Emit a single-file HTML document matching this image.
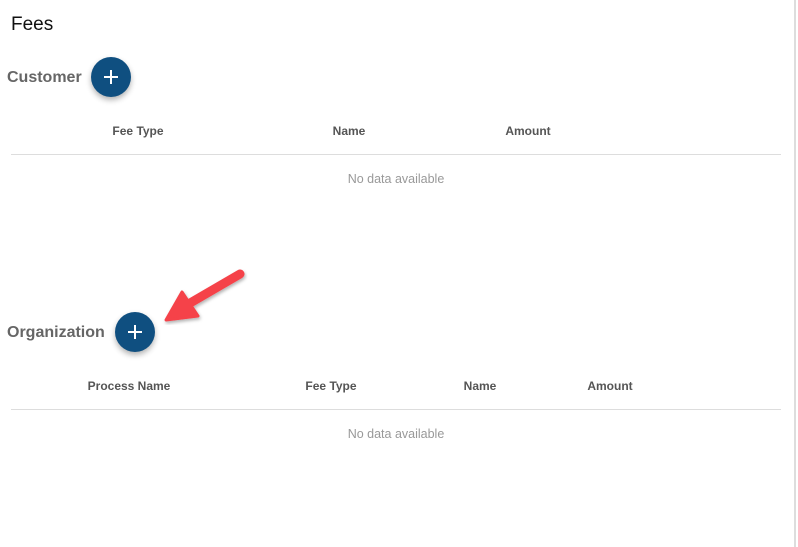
<!DOCTYPE html>
<html><head><style>
body{margin:0;width:798px;height:547px;background:#fff;position:relative;overflow:hidden;font-family:"Liberation Sans",sans-serif;}
.a{position:absolute;}
.t{font-size:19px;color:#111;left:11px;top:14px;}
.h{font-size:16px;font-weight:bold;color:#666;}
.btn{width:40px;height:40px;border-radius:50%;background:#0f4f80;box-shadow:0 3px 6px rgba(0,0,0,.3);}
.btn:before,.btn:after{content:"";position:absolute;background:#fff;left:13px;top:19px;width:14px;height:2px;}
.btn:after{left:19px;top:13px;width:2px;height:14px;}
.th{font-size:12px;font-weight:bold;color:#555;transform:translateX(-50%);}
.line{left:11px;width:770px;height:1px;background:#ddd;}
.nd{font-size:12.5px;color:#999;left:396px;transform:translateX(-50%);}
</style></head><body>
<div class="a" style="right:2px;top:0;width:2px;height:547px;background:#ddd"></div>
<div class="a t">Fees</div>
<div class="a h" style="left:7px;top:69px">Customer</div>
<div class="a btn" style="left:91px;top:57px"></div>
<div class="a th" style="left:138px;top:124px">Fee Type</div>
<div class="a th" style="left:349px;top:124px">Name</div>
<div class="a th" style="left:528px;top:124px">Amount</div>
<div class="a line" style="top:154px"></div>
<div class="a nd" style="top:172px">No data available</div>

<div class="a h" style="left:7px;top:324px">Organization</div>
<div class="a btn" style="left:115px;top:312px"></div>
<div class="a th" style="left:129px;top:379px">Process Name</div>
<div class="a th" style="left:331px;top:379px">Fee Type</div>
<div class="a th" style="left:480px;top:379px">Name</div>
<div class="a th" style="left:610px;top:379px">Amount</div>
<div class="a line" style="top:409px"></div>
<div class="a nd" style="top:427px">No data available</div>

<svg class="a" style="left:0;top:0" width="798" height="547">
<defs><filter id="s"><feDropShadow dx="1" dy="2" stdDeviation="1.5" flood-opacity="0.3"/></filter></defs>
<g filter="url(#s)" fill="#f5424a" stroke="#f5424a" stroke-linejoin="round" stroke-linecap="round">
<line x1="240" y1="274" x2="185" y2="306" stroke-width="9"/>
<polygon points="166,320 182,292 198,316" stroke-width="3"/>
</g>
</svg>
</body></html>
